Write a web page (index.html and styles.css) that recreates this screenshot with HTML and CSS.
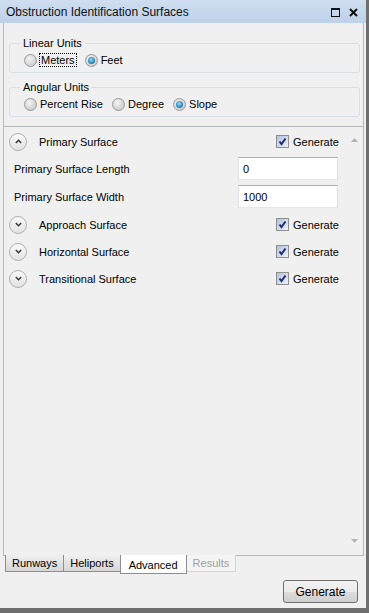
FILE: index.html
```html
<!DOCTYPE html>
<html lang="en">
<head>
    <meta charset="UTF-8">
    <title>Obstruction Identification Surfaces</title>
    <link rel="stylesheet" href="styles.css">
</head>
<body>
<div class="window">
    <div class="titlebar">
        <span class="title">Obstruction Identification Surfaces</span>
        <span class="ctrls">
            <svg width="9" height="9" viewBox="0 0 9 9"><rect x="0.5" y="0.5" width="8" height="8" fill="none" stroke="#111"/><rect x="0" y="0" width="9" height="2" fill="#111"/></svg>
            <svg width="9" height="9" viewBox="0 0 9 9"><path d="M1 1 L8 8 M8 1 L1 8" stroke="#111" stroke-width="2"/></svg>
        </span>
    </div>

    <div class="frame">
        <div class="group">
            <span class="group-label">Linear Units</span>
            <div class="radios">
                <label class="radio"><span class="dot"></span><span class="focus">Meters</span></label>
                <label class="radio"><span class="dot on"></span>Feet</label>
            </div>
        </div>
        <div class="group second">
            <span class="group-label">Angular Units</span>
            <div class="radios">
                <label class="radio"><span class="dot"></span>Percent Rise</label>
                <label class="radio"><span class="dot"></span>Degree</label>
                <label class="radio"><span class="dot on"></span>Slope</label>
            </div>
        </div>

        <div class="page">
            <div class="rows">
                <div class="sec">
                    <span class="chev"><svg width="7" height="5" viewBox="0 0 7 5"><path d="M0.8 4 L3.5 1.3 L6.2 4" fill="none" stroke="#333" stroke-width="1.4"/></svg></span>
                    <span>Primary Surface</span>
                    <label class="gen"><span class="check"></span>Generate</label>
                </div>
                <div class="field">
                    <span>Primary Surface Length</span>
                    <input type="text" value="0">
                </div>
                <div class="field">
                    <span>Primary Surface Width</span>
                    <input type="text" value="1000">
                </div>
                <div class="sec">
                    <span class="chev"><svg width="7" height="5" viewBox="0 0 7 5"><path d="M0.8 1 L3.5 3.7 L6.2 1" fill="none" stroke="#333" stroke-width="1.4"/></svg></span>
                    <span>Approach Surface</span>
                    <label class="gen"><span class="check"></span>Generate</label>
                </div>
                <div class="sec">
                    <span class="chev"><svg width="7" height="5" viewBox="0 0 7 5"><path d="M0.8 1 L3.5 3.7 L6.2 1" fill="none" stroke="#333" stroke-width="1.4"/></svg></span>
                    <span>Horizontal Surface</span>
                    <label class="gen"><span class="check"></span>Generate</label>
                </div>
                <div class="sec">
                    <span class="chev"><svg width="7" height="5" viewBox="0 0 7 5"><path d="M0.8 1 L3.5 3.7 L6.2 1" fill="none" stroke="#333" stroke-width="1.4"/></svg></span>
                    <span>Transitional Surface</span>
                    <label class="gen"><span class="check"></span>Generate</label>
                </div>
            </div>
            <div class="scrollbar">
                <svg width="7" height="4" viewBox="0 0 7 4"><path d="M3.5 0 L7 4 L0 4 Z" fill="#b4b4b4"/></svg>
                <svg width="7" height="4" viewBox="0 0 7 4"><path d="M0 0 L7 0 L3.5 4 Z" fill="#b4b4b4"/></svg>
            </div>
        </div>
    </div>

    <div class="tabs">
        <span class="tab">Runways</span>
        <span class="tab">Heliports</span>
        <span class="tab active">Advanced</span>
        <span class="tab disabled">Results</span>
    </div>
    <div class="footer">
        <button class="btn">Generate</button>
    </div>
</div>
</body>
</html>
```

FILE: styles.css
```css
body {
    margin: 0;
    font-family: 'Liberation Sans', Arial, sans-serif;
    font-size: 11px;
    color: #000;
    background: #fff;
}
.window {
    width: 366px;
    height: 608px;
    border-right: 3px solid #6e6e6e;
    border-bottom: 5px solid #6e6e6e;
    background: #f0f0f0;
    display: flex;
    flex-direction: column;
}
.titlebar {
    height: 23px;
    flex: none;
    display: flex;
    align-items: center;
    justify-content: space-between;
    padding: 0 8px 0 6px;
    background: linear-gradient(#cfdef0, #bdd1e9);
    color: #111;
}
.title {
    font-size: 12px;
}
.ctrls {
    display: flex;
    gap: 9px;
    padding-top: 1px;
}
.frame {
    flex: 1;
    min-height: 0;
    margin: 0 2px 0 3px;
    border-left: 1px solid #b9b9b9;
    border-right: 1px solid #b9b9b9;
    display: flex;
    flex-direction: column;
}
.group {
    margin: 20px 3px 0 5px;
    border: 1px solid #d5dfe5;
    border-radius: 3px;
    padding: 0 0 4px 10px;
    display: flex;
    flex-direction: column;
    align-items: flex-start;
}
.group.second {
    margin-top: 14px;
}
.group-label {
    margin-top: -8px;
    padding: 0 3px;
    height: 14px;
    line-height: 14px;
    background: #f0f0f0;
}
.radios {
    display: flex;
    align-items: center;
    height: 16px;
    margin-top: 2px;
    padding-left: 4px;
    gap: 9px;
}
.radio {
    display: flex;
    align-items: center;
    gap: 3px;
}
.dot {
    width: 13px;
    height: 13px;
    box-sizing: border-box;
    border-radius: 50%;
    border: 1px solid #9a9a9a;
    background: radial-gradient(circle at 40% 35%, #f4f4f4 0%, #d8d8d8 55%, #c2c2c2 100%);
    position: relative;
}
.dot.on::after {
    content: "";
    position: absolute;
    left: 2px;
    top: 2px;
    width: 7px;
    height: 7px;
    border-radius: 50%;
    background: radial-gradient(circle at 45% 40%, #9be0f7 0%, #2f8fbf 55%, #17587f 100%);
}
.focus {
    outline: 1px dotted #000;
    outline-offset: 0;
    padding: 0 1px;
}
.page {
    flex: 1;
    min-height: 0;
    margin-top: 9px;
    border-top: 1px solid #b9b9b9;
    border-bottom: 1px solid #b9b9b9;
    display: flex;
}
.rows {
    flex: 1;
    padding: 1px 7px 0 0;
}
.sec {
    display: flex;
    align-items: center;
    height: 27px;
    padding-left: 5px;
}
.chev {
    width: 18px;
    height: 18px;
    box-sizing: border-box;
    border-radius: 50%;
    border: 1px solid #b0b0b0;
    background: linear-gradient(#fafafa, #e2e2e2);
    display: flex;
    align-items: center;
    justify-content: center;
    margin-right: 12px;
}
.gen {
    margin-left: auto;
    width: 63px;
    display: flex;
    align-items: center;
    gap: 4px;
}
.check {
    width: 13px;
    height: 13px;
    box-sizing: border-box;
    border: 1px solid #8e8f8f;
    background:
        url("data:image/svg+xml,%3Csvg xmlns='http://www.w3.org/2000/svg' width='11' height='11'%3E%3Cpath d='M2.5 5.5 L4.5 8 L8.5 2.5' fill='none' stroke='%231c2f78' stroke-width='2'/%3E%3C/svg%3E") center no-repeat,
        linear-gradient(135deg, #b4c0da, #eef1f8);
    flex: none;
}
.field {
    display: flex;
    align-items: center;
    justify-content: space-between;
    height: 28px;
    padding-left: 10px;
}
.field input {
    width: 100px;
    height: 23px;
    box-sizing: border-box;
    margin: -1px 1px 0 0;
    border: 1px solid #abadb3;
    border-color: #abadb3 #dbdfe6 #e3e9ef #e2e3ea;
    padding: 0 4px;
    background: #fff;
    font-family: 'Liberation Sans', Arial, sans-serif;
    font-size: 11px;
    color: #000;
}
.scrollbar {
    width: 17px;
    display: flex;
    flex-direction: column;
    justify-content: space-between;
    align-items: center;
    padding: 11px 0 12px;
}
.tabs {
    display: flex;
    align-items: flex-start;
    height: 19px;
    flex: none;
    padding-left: 5px;
    margin-top: -1px;
}
.tab {
    height: 17px;
    line-height: 16px;
    box-sizing: border-box;
    padding: 0 6px;
    border: 1px solid #8c8e94;
    border-top: none;
    margin-right: -1px;
    background: linear-gradient(#f0f0f0, #d6d6d6);
}
.tab.active {
    height: 19px;
    padding: 2px 8px 0;
    background: #fff;
    position: relative;
    z-index: 1;
}
.tab.disabled {
    color: #a0a0a0;
    border-color: #d4d4d4;
    background: #f4f4f4;
}
.footer {
    flex: none;
    height: 34px;
    box-sizing: border-box;
    display: flex;
    justify-content: flex-end;
    align-items: flex-start;
    padding: 6px 8px 0 0;
}
.btn {
    width: 75px;
    height: 23px;
    border: 1px solid #707070;
    border-radius: 3px;
    background: linear-gradient(#f2f2f2 0%, #ebebeb 50%, #dddddd 51%, #cfcfcf 100%);
    font-family: 'Liberation Sans', Arial, sans-serif;
    font-size: 12px;
    color: #000;
    padding: 0;
}
```
